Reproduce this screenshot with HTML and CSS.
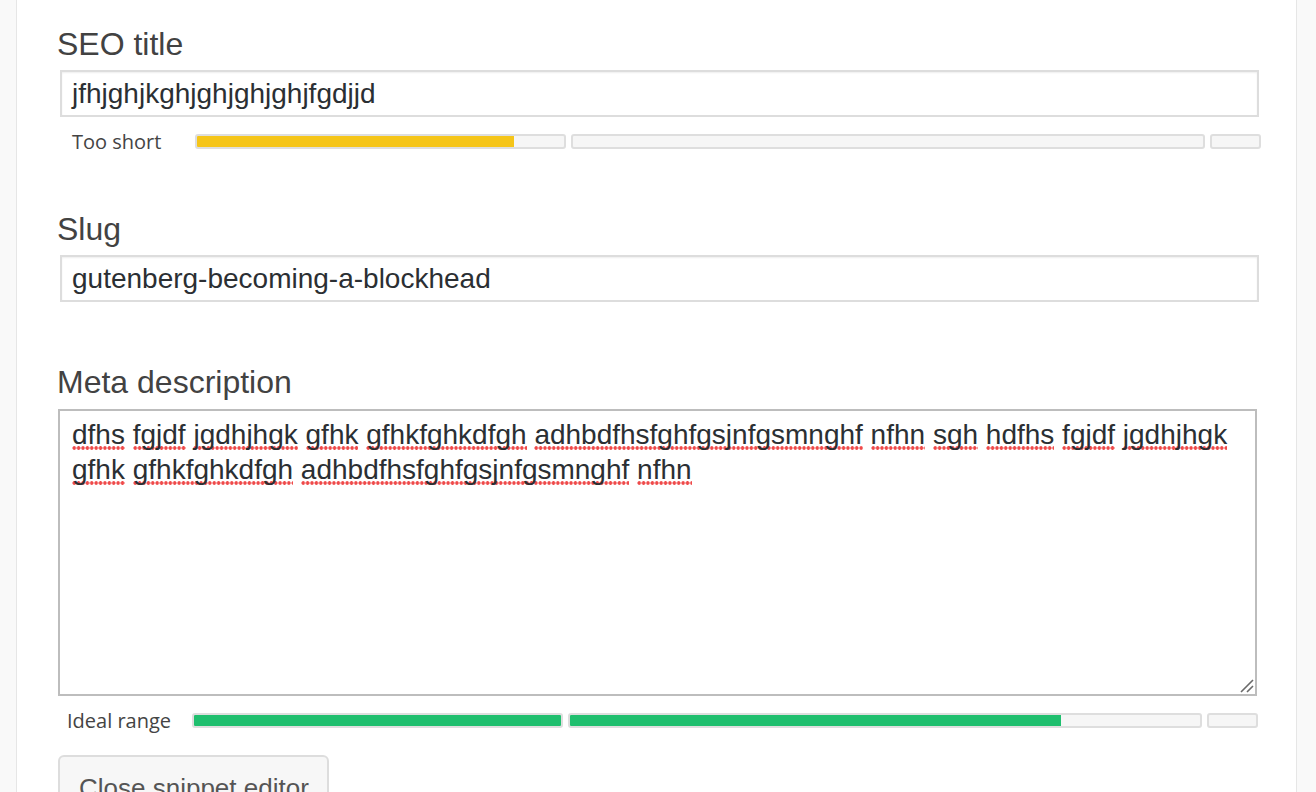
FILE: index.html
```html
<!DOCTYPE html>
<html lang="en">
<head>
<meta charset="utf-8">
<title>Snippet editor</title>
<link rel="stylesheet" href="styles.css">
</head>
<body>
<div class="panel">
  <div class="field field-title">
    <div class="label">SEO title</div>
    <div class="input">jfhjghjkghjghjghjghjfgdjjd</div>
    <div class="meter">
      <span class="meter-label">Too short</span>
      <div class="bars">
        <div class="bar bar-a"><div class="fill fill-yellow" style="width:86.4%"></div></div>
        <div class="bar bar-b"></div>
        <div class="bar bar-c"></div>
      </div>
    </div>
  </div>

  <div class="field field-slug">
    <div class="label">Slug</div>
    <div class="input">gutenberg-becoming-a-blockhead</div>
  </div>

  <div class="field field-desc">
    <div class="label">Meta description</div>
    <div class="textarea"><span class="sp">dfhs</span> <span class="sp">fgjdf</span> <span class="sp">jgdhjhgk</span> <span class="sp">gfhk</span> <span class="sp">gfhkfghkdfgh</span> <span class="sp">adhbdfhsfghfgsjnfgsmnghf</span> <span class="sp">nfhn</span> <span class="sp">sgh</span> <span class="sp">hdfhs</span> <span class="sp">fgjdf</span> <span class="sp">jgdhjhgk</span> <span class="sp">gfhk</span> <span class="sp">gfhkfghkdfgh</span> <span class="sp">adhbdfhsfghfgsjnfgsmnghf</span> <span class="sp">nfhn</span><svg class="grip" width="14" height="14" viewBox="0 0 14 14"><path d="M1 13 L13 1 M7 13 L13 7" stroke="#6a6a6a" stroke-width="1.6" fill="none"/></svg></div>
    <div class="meter meter-desc">
      <span class="meter-label">Ideal range</span>
      <div class="bars">
        <div class="bar bar-a"><div class="fill fill-green" style="width:100%"></div></div>
        <div class="bar bar-b"><div class="fill fill-green" style="width:78%"></div></div>
        <div class="bar bar-c"></div>
      </div>
    </div>
    <button class="btn">Close snippet editor</button>
  </div>
</div>
</body>
</html>
```
FILE: styles.css
```css
html, body {
  margin: 0;
  padding: 0;
  background: #f9f9f9;
  height: 100%;
  overflow: hidden;
}

.panel {
  margin-left: 16px;
  width: 1281px;
  min-height: 100%;
  box-sizing: border-box;
  background: #ffffff;
  border-left: 1px solid #e6e6e6;
  border-right: 1px solid #e6e6e6;
  padding: 26px 0 0 40px;
  font-family: "Liberation Sans", Arial, sans-serif;
}

.field {
  display: flex;
  flex-direction: column;
  align-items: flex-start;
  margin-bottom: 62px;
}

.label {
  font-size: 32px;
  line-height: 36px;
  color: #424242;
  margin-bottom: 8px;
}

.input {
  margin-left: 3px;
  width: 1199px;
  height: 47px;
  box-sizing: border-box;
  border: 2px solid #dddddd;
  box-shadow: inset 0 1px 2px rgba(0, 0, 0, 0.07);
  padding: 0 10px;
  font-size: 28px;
  line-height: 43px;
  color: #2b2f33;
  white-space: nowrap;
}

.textarea {
  position: relative;
  margin-left: 1px;
  margin-top: 1px;
  width: 1199px;
  height: 287px;
  box-sizing: border-box;
  border: 2px solid #bdbdbd;
  padding: 6px 12px 4px;
  font-size: 28px;
  line-height: 35px;
  color: #2b2f33;
}

.grip {
  position: absolute;
  right: 1px;
  bottom: 1px;
}

.sp {
  background-image: radial-gradient(circle at 2.2px 2px, #ef4a4a 1.5px, rgba(239, 74, 74, 0) 2.1px);
  background-size: 4.4px 4px;
  background-repeat: repeat-x;
  background-position: 0 100%;
}

.meter {
  display: flex;
  align-items: flex-start;
  margin-top: 17px;
  padding-left: 15px;
  font-family: "Open Sans", sans-serif;
}

.meter-label {
  width: 123px;
  font-size: 20px;
  line-height: 15px;
  color: #444444;
}

.meter-desc {
  padding-left: 10px;
}

.meter-desc .meter-label {
  width: 125px;
}

.bars {
  display: flex;
  gap: 5px;
}

.bar {
  height: 15px;
  box-sizing: border-box;
  border: 2px solid #dedede;
  border-radius: 3px;
  background: #f6f6f6;
  overflow: hidden;
}

.bar-a { width: 371px; }
.bar-b { width: 634px; }
.bar-c { width: 51px; }

.fill {
  height: 100%;
}

.fill-yellow { background: #f5c519; }
.fill-green { background: #1fbf6e; }

.btn {
  margin-top: 27px;
  margin-left: 1px;
  padding: 14px 18px 14px 19px;
  border: 2px solid #dddddd;
  border-radius: 6px;
  background: #f7f7f7;
  font-family: "Liberation Sans", Arial, sans-serif;
  font-size: 26px;
  line-height: 34px;
  color: #555555;
}
```
